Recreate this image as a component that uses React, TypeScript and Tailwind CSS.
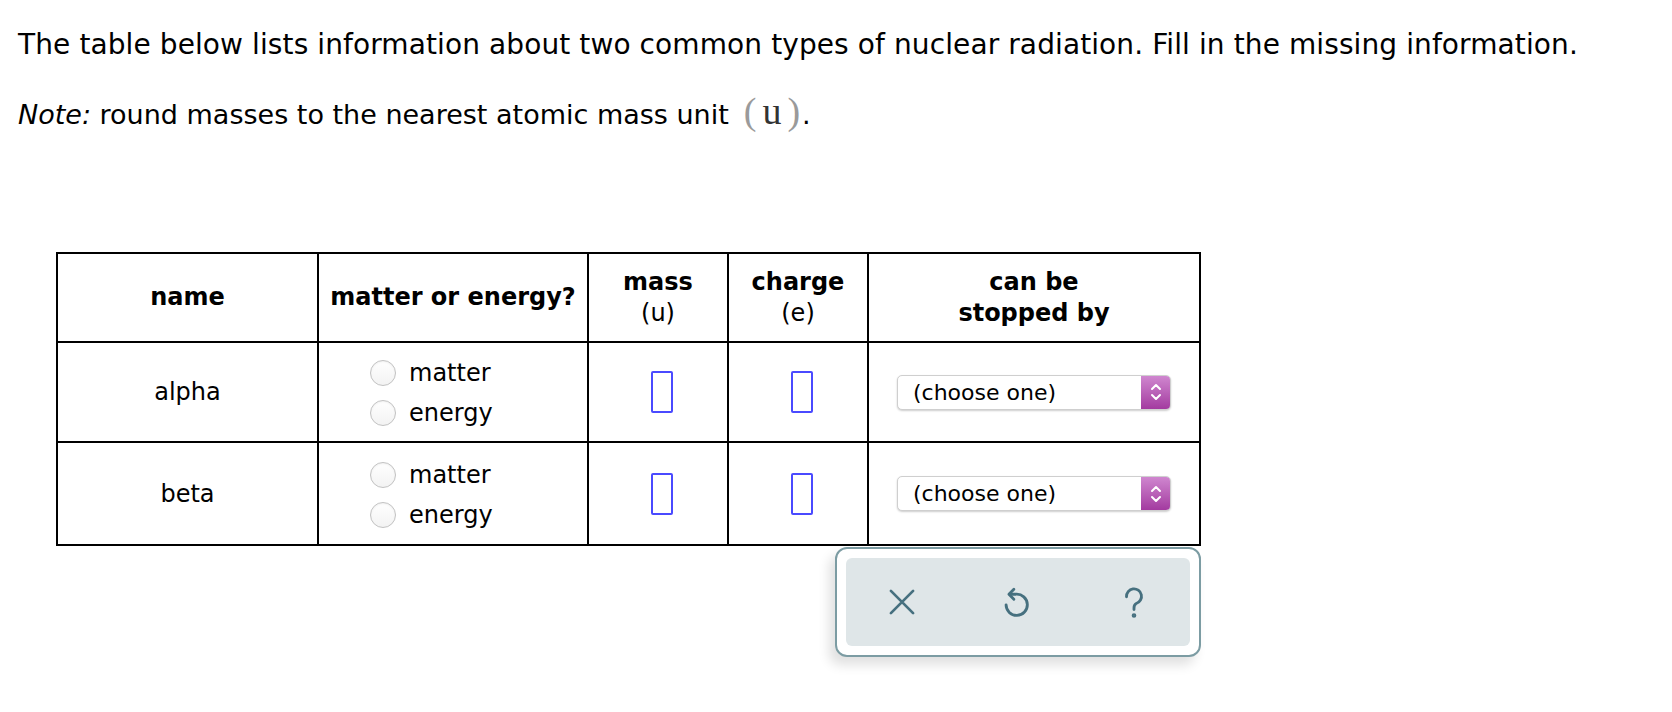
import React from "react";

const font = { fontFamily: '"DejaVu Sans", Verdana, sans-serif' };

const Radio = ({ label }: { label: string }) => (
  <label className="flex items-center gap-[13px] h-[40px]">
    <span className="w-[26px] h-[26px] rounded-full border border-[#c2c2c2] bg-gradient-to-b from-white to-[#f3f3f3] shadow-[inset_0_1px_2px_rgba(0,0,0,0.06)]" />
    <span className="text-[24px] leading-none">{label}</span>
  </label>
);

const AnswerBox = () => (
  <div className="flex justify-center pl-2">
    <div className="w-[22px] h-[42px] border-2 border-[#4a4aff] rounded-[2px]" />
  </div>
);

const Select = () => (
  <div className="flex justify-center">
    <div className="flex w-[274px] h-[35px] rounded-[5px] border border-[#cfcfcf] bg-white shadow-[0_1px_2px_rgba(0,0,0,0.2)] overflow-hidden">
      <div className="flex-1 flex items-center pl-[15px] text-[22px]">(choose one)</div>
      <div className="w-[29px] flex items-center justify-center bg-gradient-to-b from-[#cf86cf] to-[#a33aa0]">
        <svg viewBox="0 0 12 20" className="w-[12px] h-[20px]" fill="none" stroke="white" strokeWidth="2" strokeLinecap="round" strokeLinejoin="round">
          <path d="M2 7 L6 3 L10 7" />
          <path d="M2 13 L6 17 L10 13" />
        </svg>
      </div>
    </div>
  </div>
);

const cell = "border-2 border-black text-center align-middle p-0";

const Row = ({ name, h }: { name: string; h: string }) => (
  <tr className={h}>
    <td className={cell + " text-[24px]"}>{name}</td>
    <td className={cell}>
      <div className="flex flex-col pl-[51px] pt-[2px]">
        <Radio label="matter" />
        <Radio label="energy" />
      </div>
    </td>
    <td className={cell}>
      <AnswerBox />
    </td>
    <td className={cell}>
      <AnswerBox />
    </td>
    <td className={cell}>
      <Select />
    </td>
  </tr>
);

const iconColor = "#46707f";

export default function App() {
  return (
    <div className="bg-white min-h-screen text-black" style={font}>
      <div className="pl-[18px] pt-[24px]">
        <p className="text-[28px] leading-[42px] tracking-[0.1px]">
          The table below lists information about two common types of nuclear radiation. Fill in the missing information.
        </p>
        <p className="text-[27px] leading-[42px] mt-[26px] h-[42px]">
          <i>Note:</i> round masses to the nearest atomic mass unit
          <span style={{ fontFamily: '"Liberation Serif", serif' }} className="text-[38px] leading-none ml-[15px]">
            <span className="text-[#9a9a9a]">(</span>
            <span className="text-[#333] mx-[6px]">u</span>
            <span className="text-[#9a9a9a]">)</span>
          </span>
          <span className="ml-[2px]">.</span>
        </p>
      </div>

      <div className="ml-[56px] mt-[118px] w-[1145px]">
        <table className="table-fixed border-collapse w-[1145px]">
          <colgroup>
            <col className="w-[261px]" />
            <col className="w-[270px]" />
            <col className="w-[140px]" />
            <col className="w-[140px]" />
            <col className="w-[332px]" />
          </colgroup>
          <thead>
            <tr className="h-[89px] font-bold text-[24px] leading-[31px]">
              <th className={cell}>name</th>
              <th className={cell}>matter or energy?</th>
              <th className={cell}>
                mass
                <br />
                <span className="font-normal">(u)</span>
              </th>
              <th className={cell}>
                charge
                <br />
                <span className="font-normal">(e)</span>
              </th>
              <th className={cell}>
                can be
                <br />
                stopped by
              </th>
            </tr>
          </thead>
          <tbody>
            <Row name="alpha" h="h-[100px]" />
            <Row name="beta" h="h-[103px]" />
          </tbody>
        </table>

        <div className="flex justify-end mt-[1px]">
          <div className="w-[366px] h-[110px] rounded-[12px] border-2 border-[#7c9ca3] bg-white p-[9px] shadow-[-6px_8px_12px_rgba(0,0,0,0.12)]">
            <div className="h-full rounded-[6px] bg-[#dfe6e8] flex items-center justify-between pl-[42px] pr-[38px]">
              <svg viewBox="0 0 24 24" className="w-[28px] h-[28px]" fill="none" stroke={iconColor} strokeWidth="2.3" strokeLinecap="round">
                <path d="M2.5 2.5 L21.5 21.5 M21.5 2.5 L2.5 21.5" />
              </svg>
              <svg viewBox="0 0 24 24" className="w-[34px] h-[34px]" fill="none" stroke={iconColor} strokeWidth="2" strokeLinecap="round" strokeLinejoin="round">
                <path d="M5 14 A7.5 7.5 0 1 0 12 6.5 H8" />
                <path d="M10.5 3 L7 6.5 L10.5 10" />
              </svg>
              <svg viewBox="0 0 24 24" className="w-[36px] h-[36px]" fill="none" stroke={iconColor} strokeWidth="1.9" strokeLinecap="round">
                <path d="M7 8.5 A5 5 0 1 1 13.5 13 C12.3 13.6 12 14.5 12 16 V17" />
                <circle cx="12" cy="21" r="0.6" fill={iconColor} />
              </svg>
            </div>
          </div>
        </div>
      </div>
    </div>
  );
}
